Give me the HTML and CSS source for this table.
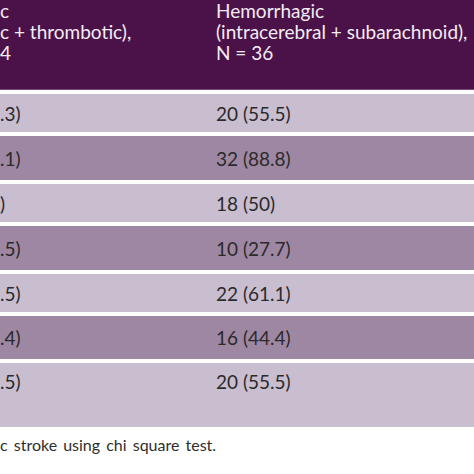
FILE: index.html
```html
<!DOCTYPE html>
<html>
<head>
<meta charset="utf-8">
<link rel="stylesheet" href="styles.css">
</head>
<body>
<div class="table">
  <div class="row head">
    <div class="cell c1">c<br>c + thrombotic),<br>4</div>
    <div class="cell c2">Hemorrhagic<br>(intracerebral + subarachnoid),<br>N = 36</div>
  </div>
  <div class="row light r38"><div class="cell c1">.3)</div><div class="cell c2">20 (55.5)</div></div>
  <div class="row dark r44"><div class="cell c1">.1)</div><div class="cell c2">32 (88.8)</div></div>
  <div class="row light r38"><div class="cell c1">)</div><div class="cell c2">18 (50)</div></div>
  <div class="row dark r44"><div class="cell c1">.5)</div><div class="cell c2">10 (27.7)</div></div>
  <div class="row light r38"><div class="cell c1">.5)</div><div class="cell c2">22 (61.1)</div></div>
  <div class="row dark r43"><div class="cell c1">.4)</div><div class="cell c2">16 (44.4)</div></div>
  <div class="row light last"><div class="cell c1">.5)</div><div class="cell c2">20 (55.5)</div></div>
</div>
<p class="note">c stroke using chi square test.</p>
</body>
</html>
```
FILE: styles.css
```css
html, body {
  margin: 0;
  padding: 0;
  background: #ffffff;
}
body {
  font-family: "Lato", "Open Sans", sans-serif;
  font-size: 19px;
  width: 474px;
  overflow: hidden;
}
.table {
  display: flex;
  flex-direction: column;
  gap: 4px;
}
.row {
  display: grid;
  grid-template-columns: 216px 1fr;
  align-items: center;
  color: #2a2a2a;
  line-height: 21px;
}
.head {
  background: #4b1249;
  color: #f3ecf3;
  height: 90px;
  align-items: start;
  border-bottom: 1px solid #7a4a78;
  box-sizing: border-box;
}
.light { background: #c9bdd0; }
.dark { background: #9e87a2; }
.r38 { height: 38px; }
.r43 { height: 43px; }
.r44 { height: 44px; }
.last {
  height: 64px;
  align-items: start;
  padding-top: 8px;
  box-sizing: border-box;
}
.cell {
  white-space: nowrap;
}
.note {
  margin: 7px 0 0 0;
  font-size: 16px;
  color: #2e2e2e;
  line-height: 21px;
  word-spacing: 2px;
}
```
